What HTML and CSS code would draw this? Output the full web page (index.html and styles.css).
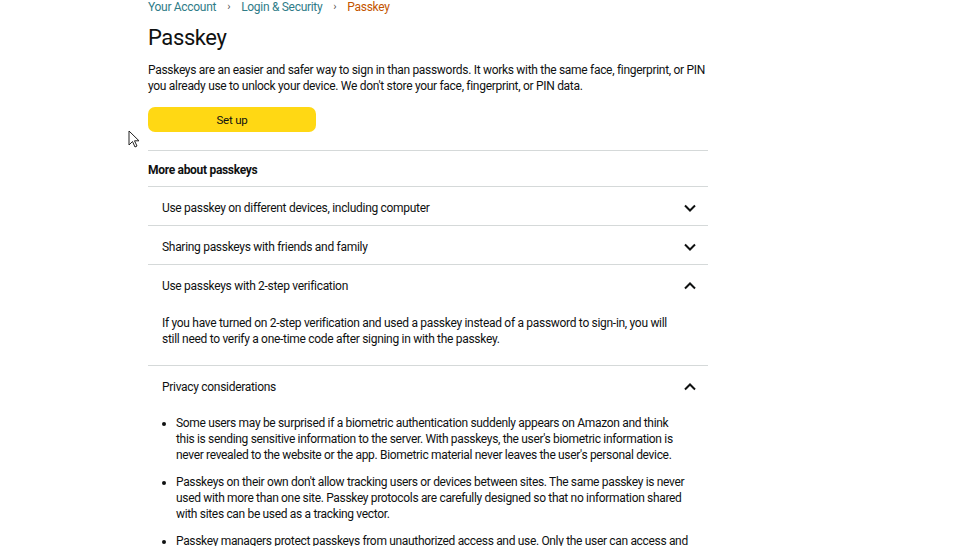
FILE: index.html
```html
<!DOCTYPE html>
<html lang="en">
<head>
<meta charset="utf-8">
<title>Passkey</title>
<link rel="stylesheet" href="styles.css">
</head>
<body>
<div class="page">
  <nav class="crumbs">
    <a class="crumb">Your Account</a>
    <span class="sep">›</span>
    <a class="crumb">Login &amp; Security</a>
    <span class="sep">›</span>
    <span class="crumb current">Passkey</span>
  </nav>
  <h1 class="title">Passkey</h1>
  <p class="intro">Passkeys are an easier and safer way to sign in than passwords. It works with the same face, fingerprint, or PIN you already use to unlock your device. We don't store your face, fingerprint, or PIN data.</p>
  <div class="btn-row"><button class="btn">Set up</button></div>
  <div class="section-head">More about passkeys</div>
  <div class="acc">
    <div class="acc-head"><span>Use passkey on different devices, including computer</span>
      <svg class="chev" viewBox="0 0 12 8"><path d="M1 1.5 L6 6.5 L11 1.5" /></svg></div>
  </div>
  <div class="acc">
    <div class="acc-head"><span>Sharing passkeys with friends and family</span>
      <svg class="chev" viewBox="0 0 12 8"><path d="M1 1.5 L6 6.5 L11 1.5" /></svg></div>
  </div>
  <div class="acc open">
    <div class="acc-head"><span>Use passkeys with 2-step verification</span>
      <svg class="chev" viewBox="0 0 12 8"><path d="M1 6.5 L6 1.5 L11 6.5" /></svg></div>
    <div class="acc-body"><p class="body-text">If you have turned on 2-step verification and used a passkey instead of a password to sign-in, you will still need to verify a one-time code after signing in with the passkey.</p></div>
  </div>
  <div class="acc open last">
    <div class="acc-head"><span>Privacy considerations</span>
      <svg class="chev" viewBox="0 0 12 8"><path d="M1 6.5 L6 1.5 L11 6.5" /></svg></div>
    <div class="acc-body">
      <ul class="list">
        <li>Some users may be surprised if a biometric authentication suddenly appears on Amazon and think this is sending sensitive information to the server. With passkeys, the user's biometric information is never revealed to the website or the app. Biometric material never leaves the user's personal device.</li>
        <li>Passkeys on their own don't allow tracking users or devices between sites. The same passkey is never used with more than one site. Passkey protocols are carefully designed so that no information shared with sites can be used as a tracking vector.</li>
        <li>Passkey managers protect passkeys from unauthorized access and use. Only the user can access and use their passkeys with their device's screen lock.</li>
      </ul>
    </div>
  </div>
</div>
<svg class="cursor" viewBox="0 0 12 19"><path d="M1 1 L1 15 L4.5 11.5 L7 17 L9 16 L6.5 10.8 L11 10.8 Z" fill="#fff" stroke="#222" stroke-width="1"/></svg>
</body>
</html>
```
FILE: styles.css
```css
html, body {
  margin: 0;
  padding: 0;
  background: #fff;
}
body {
  font-family: Roboto, "Liberation Sans", sans-serif;
  color: #0f1111;
  font-size: 12px;
  letter-spacing: -0.3px;
  line-height: 16px;
  overflow: hidden;
}
.page {
  width: 560px;
  margin-left: 148px;
}
.crumbs {
  display: flex;
  align-items: center;
  height: 14px;
  font-size: 12px;
  line-height: 14px;
  color: #2f7c88;
  margin-top: 0;
}
.crumb { color: #2f7c88; }
.crumb.current { color: #c45500; }
.sep {
  margin: 0 11px;
  font-size: 11px;
  color: #555;
}
.title {
  font-weight: 400;
  font-size: 22px;
  letter-spacing: -0.4px;
  line-height: 28px;
  margin: 10px 0 0 0;
}
.intro {
  margin: 10px 0 0 0;
}
.btn-row { margin-top: 13px; display: flex; }
.btn {
  width: 168px;
  height: 25px;
  background: #ffd814;
  border: none;
  border-radius: 7px;
  font-family: inherit;
  font-size: 11.5px;
  letter-spacing: -0.2px;
  color: #0f1111;
  padding: 0;
}
.section-head {
  margin-top: 18px;
  border-top: 1px solid #d5d9d9;
  border-bottom: 1px solid #d5d9d9;
  display: flex;
  align-items: center;
  padding-top: 2px;
  box-sizing: border-box;
  height: 37px;
  font-weight: 700;
}
.acc {
  border-bottom: 1px solid #d5d9d9;
}
.acc.last { border-bottom: none; }
.acc-head {
  height: 38px;
  box-sizing: border-box;
  padding: 3px 12px 0 14px;
  display: flex;
  align-items: center;
  justify-content: space-between;
}
.chev {
  width: 12px;
  height: 8px;
  fill: none;
  stroke: #0f1111;
  stroke-width: 2;
}
.acc-body {
  padding: 0 14px 18px 14px;
}
.body-text {
  margin: 12px 14px 0 0;
}
.list {
  margin: 11px 5px 0 0;
  padding-left: 14px;
  letter-spacing: -0.33px;
}
.list li {
  margin-bottom: 11px;
}
.cursor {
  position: absolute;
  left: 128px;
  top: 130px;
  width: 12px;
  height: 19px;
}
```
